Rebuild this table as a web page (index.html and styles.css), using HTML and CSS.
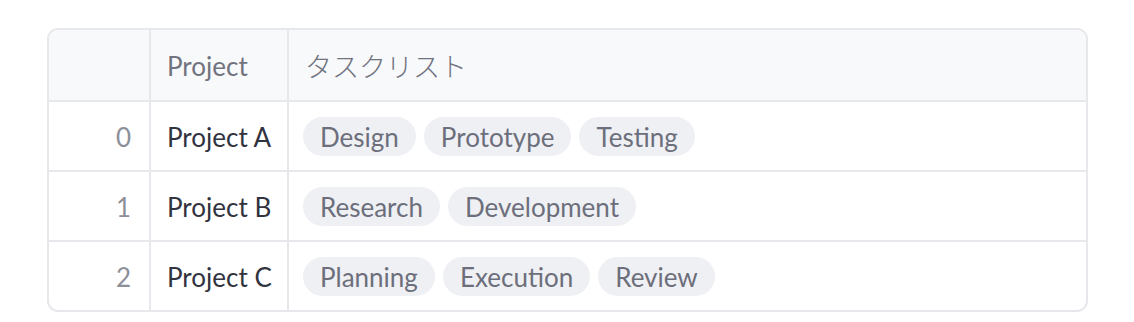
FILE: index.html
```html
<!DOCTYPE html>
<html lang="ja">
<head>
<meta charset="utf-8">
<link rel="stylesheet" href="styles.css">
</head>
<body>
<div class="page">
  <div class="grid">
    <div class="cell head idx"></div>
    <div class="cell head">Project</div>
    <div class="cell head last">タスクリスト</div>

    <div class="cell idx">0</div>
    <div class="cell name">Project A</div>
    <div class="cell list last"><span class="chip">Design</span><span class="chip">Prototype</span><span class="chip">Testing</span></div>

    <div class="cell idx">1</div>
    <div class="cell name">Project B</div>
    <div class="cell list last"><span class="chip">Research</span><span class="chip">Development</span></div>

    <div class="cell idx bottom">2</div>
    <div class="cell name bottom">Project C</div>
    <div class="cell list last bottom"><span class="chip">Planning</span><span class="chip">Execution</span><span class="chip">Review</span></div>
  </div>
</div>
</body>
</html>
```
FILE: styles.css
```css
html, body {
  margin: 0;
  padding: 0;
  background: #ffffff;
}
.page {
  padding: 28px 0 0 47px;
  font-family: "Source Sans Pro", "Lato", "Noto Sans CJK JP", sans-serif;
  font-size: 26px;
}
.grid {
  width: 1041px;
  box-sizing: border-box;
  display: grid;
  grid-template-columns: 102px 138px 1fr;
  grid-template-rows: 72px 70px 70px 68px;
  border: 2px solid #e7e8ec;
  border-radius: 11px;
  overflow: hidden;
}
.cell {
  display: flex;
  align-items: center;
  border-right: 2px solid #e7e8ec;
  border-bottom: 2px solid #e7e8ec;
  color: #31333f;
  padding: 0 16px;
  padding-top: 2px;
  white-space: nowrap;
}
.cell.last { border-right: none; }
.cell.bottom { border-bottom: none; }
.head {
  background: #f8f9fb;
  color: #71737f;
}
.head.last {
  font-family: "Noto Sans CJK JP", sans-serif;
  font-size: 27px;
  font-weight: 300;
  padding-top: 0;
}
.idx {
  justify-content: flex-end;
  color: #8d909a;
  padding-right: 18px;
}
.list {
  padding-left: 14px;
  gap: 8px;
  padding-top: 0;
}
.chip {
  display: inline-flex;
  align-items: center;
  height: 39px;
  padding: 0 17px;
  padding-top: 2px;
  box-sizing: border-box;
  border-radius: 20px;
  background: #eff0f4;
  color: #6c6f7b;
}
```
